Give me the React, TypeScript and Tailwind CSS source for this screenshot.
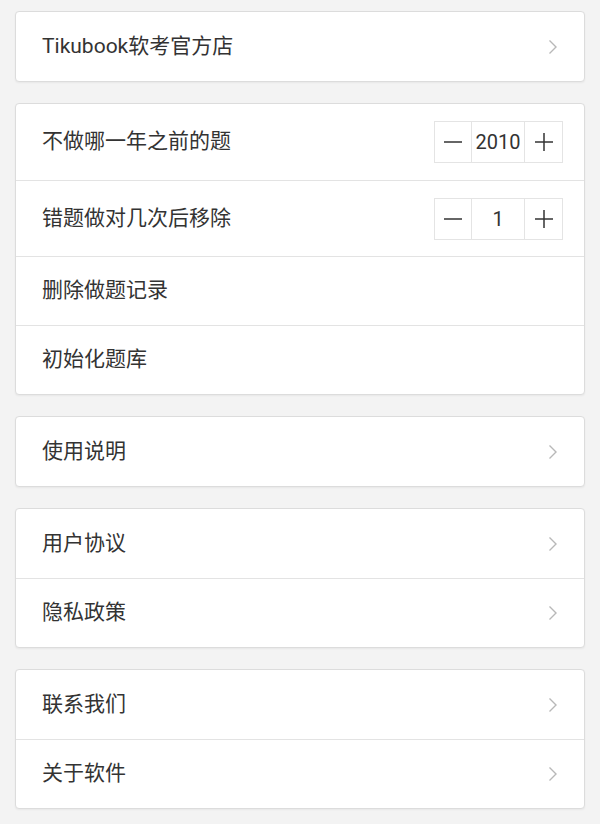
import React from "react";

const font = { fontFamily: 'Roboto, "Noto Sans CJK SC", sans-serif' };

function Chevron() {
  return (
    <svg width="10" height="16" viewBox="0 0 10 16" className="shrink-0">
      <polyline points="1.5,1.5 8,8 1.5,14.5" fill="none" stroke="#b8b8b8" strokeWidth="1.4" />
    </svg>
  );
}

function Stepper({ value }: { value: string }) {
  return (
    <div className="flex h-[42px] border border-[#e4e4e4]">
      <div className="flex w-[37px] items-center justify-center border-r border-[#e4e4e4]">
        <svg width="18" height="18" viewBox="0 0 18 18">
          <line x1="0" y1="9" x2="18" y2="9" stroke="#333" strokeWidth="1.5" />
        </svg>
      </div>
      <div className="flex w-[52px] items-center justify-center text-[20px] text-[#333]">{value}</div>
      <div className="flex w-[38px] items-center justify-center border-l border-[#e4e4e4]">
        <svg width="18" height="18" viewBox="0 0 18 18">
          <line x1="0" y1="9" x2="18" y2="9" stroke="#333" strokeWidth="1.5" />
          <line x1="9" y1="0" x2="9" y2="18" stroke="#333" strokeWidth="1.5" />
        </svg>
      </div>
    </div>
  );
}

function Row({ label, right, tall }: { label: string; right?: React.ReactNode; tall?: boolean }) {
  return (
    <div
      className={`flex items-center justify-between border-t border-[#e3e3e3] pl-[26px] first:border-t-0 ${
        tall ? "h-[76px] pr-[21px]" : "h-[69px] pr-[26px]"
      }`}
    >
      <span className="text-[21px] text-[#333]">{label}</span>
      {right}
    </div>
  );
}

function Card({ children }: { children: React.ReactNode }) {
  return (
    <div className="overflow-hidden rounded-[4px] border border-[#dcdcdc] bg-white shadow-[0_1px_2px_rgba(0,0,0,0.05)]">
      {children}
    </div>
  );
}

export default function App() {
  return (
    <div className="min-h-[824px] bg-[#f3f3f3] px-[15px] pt-[11px]" style={font}>
      <div className="flex flex-col gap-[21px]">
        <Card>
          <Row label="Tikubook软考官方店" right={<Chevron />} />
        </Card>
        <Card>
          <Row label="不做哪一年之前的题" tall right={<Stepper value="2010" />} />
          <Row label="错题做对几次后移除" tall right={<Stepper value="1" />} />
          <Row label="删除做题记录" />
          <Row label="初始化题库" />
        </Card>
        <Card>
          <Row label="使用说明" right={<Chevron />} />
        </Card>
        <Card>
          <Row label="用户协议" right={<Chevron />} />
          <Row label="隐私政策" right={<Chevron />} />
        </Card>
        <Card>
          <Row label="联系我们" right={<Chevron />} />
          <Row label="关于软件" right={<Chevron />} />
        </Card>
      </div>
    </div>
  );
}
